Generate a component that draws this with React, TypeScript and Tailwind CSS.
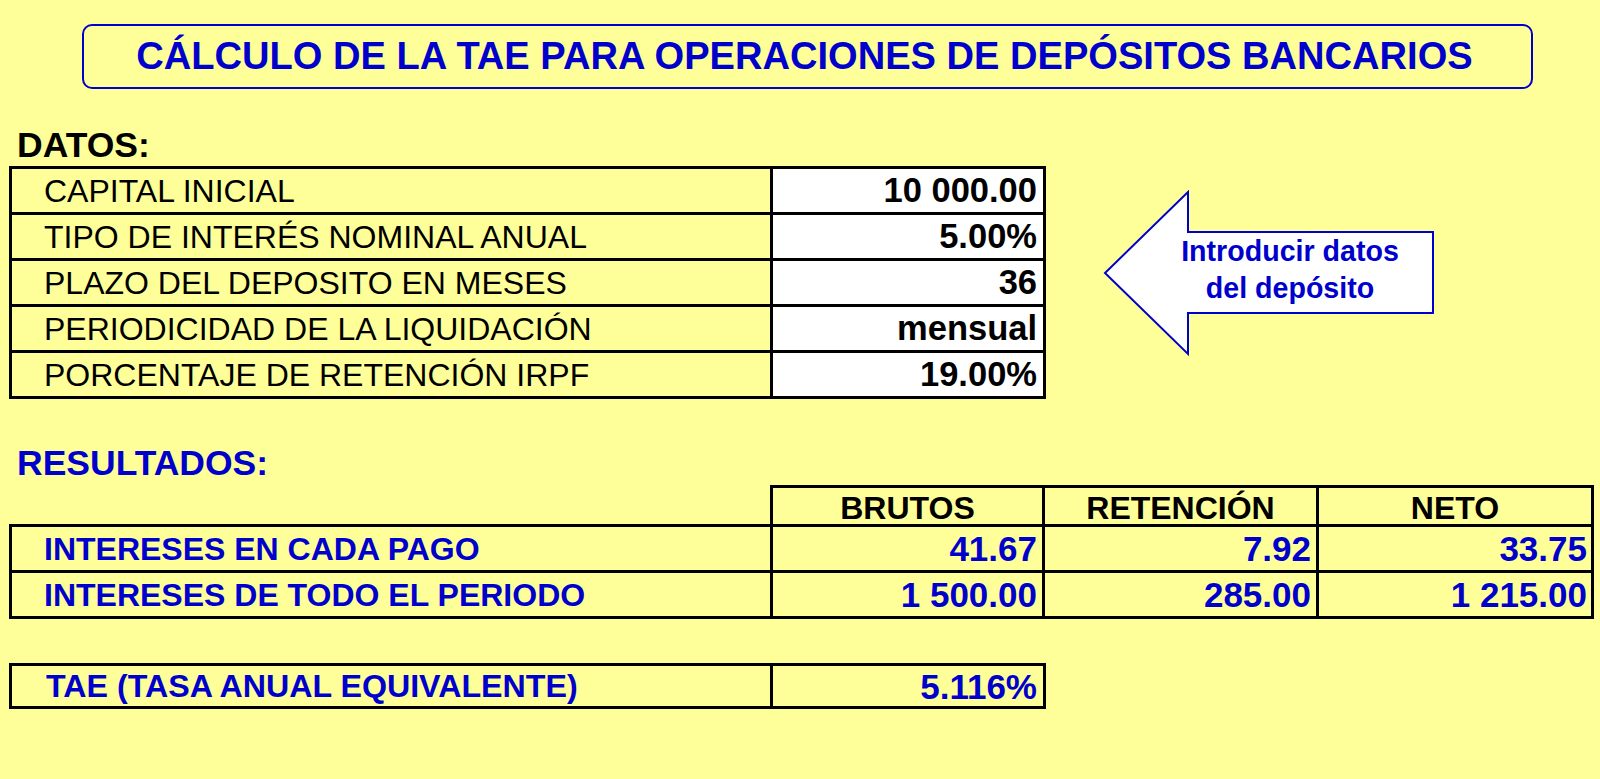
import React from 'react';

const blue = 'text-[#0000cc]';

const datos = [
  { label: 'CAPITAL INICIAL', value: '10 000.00' },
  { label: 'TIPO DE INTERÉS NOMINAL ANUAL', value: '5.00%' },
  { label: 'PLAZO DEL DEPOSITO EN MESES', value: '36' },
  { label: 'PERIODICIDAD DE LA LIQUIDACIÓN', value: 'mensual' },
  { label: 'PORCENTAJE DE RETENCIÓN IRPF', value: '19.00%' },
];

const resultados = [
  { label: 'INTERESES EN CADA PAGO', brutos: '41.67', retencion: '7.92', neto: '33.75' },
  { label: 'INTERESES DE TODO EL PERIODO', brutos: '1 500.00', retencion: '285.00', neto: '1 215.00' },
];

// Left-pointing arrow with the hint text
function HintArrow() {
  return (
    <svg width="334" height="168" viewBox="0 0 334 168" className="ml-[57px] mt-[24px] shrink-0">
      <path
        d="M2 83 L85 2 L85 42 L330 42 L330 123 L85 123 L85 164 Z"
        fill="#ffffff"
        stroke="#0000cc"
        strokeWidth="2"
      />
      <text
        x="187"
        y="71"
        textAnchor="middle"
        fontFamily="'Liberation Sans', Arial, sans-serif"
        fontWeight="bold"
        fontSize="28.6"
        fill="#0000cc"
      >
        Introducir datos
      </text>
      <text
        x="187"
        y="108"
        textAnchor="middle"
        fontFamily="'Liberation Sans', Arial, sans-serif"
        fontWeight="bold"
        fontSize="28.6"
        fill="#0000cc"
      >
        del depósito
      </text>
    </svg>
  );
}

export default function App() {
  return (
    <div className="min-h-screen w-full bg-[#ffff99] font-['Liberation_Sans',Arial,sans-serif] pt-[24px] leading-none">
      {/* Title */}
      <div className={`ml-[82px] w-[1451px] h-[65px] pr-[6px] border-2 border-[#0000cc] rounded-[10px] flex items-center justify-center text-[38.1px] font-bold ${blue}`}>
        CÁLCULO DE LA TAE PARA OPERACIONES DE DEPÓSITOS BANCARIOS
      </div>

      {/* Datos */}
      <h2 className="mt-[39px] ml-[17px] h-[36px] text-[35.5px] font-bold text-black">DATOS:</h2>
      <div className="mt-[2px] flex items-start">
        <div className="ml-[9px] grid grid-cols-[761px_276px]">
          {datos.map((row, i) => (
            <React.Fragment key={row.label}>
              <div
                className={`flex items-center pl-[32px] border-l-[3px] border-b-[3px] border-black text-[32px] text-black ${
                  i === 0 ? 'h-[49px] border-t-[3px]' : 'h-[46px]'
                }`}
              >
                {row.label}
              </div>
              <div
                className={`flex items-center justify-end pr-[6px] bg-white border-l-[3px] border-r-[3px] border-b-[3px] border-black text-[34.5px] font-bold text-black ${
                  i === 0 ? 'h-[49px] border-t-[3px]' : 'h-[46px]'
                }`}
              >
                {row.value}
              </div>
            </React.Fragment>
          ))}
        </div>
        <HintArrow />
      </div>

      {/* Resultados */}
      <h2 className={`mt-[47px] ml-[17px] h-[36px] text-[35.5px] font-bold ${blue}`}>RESULTADOS:</h2>
      <div className="mt-[3px] ml-[9px] grid grid-cols-[761px_275px_274px_275px]">
        <div className="h-[39px]" />
        {['BRUTOS', 'RETENCIÓN', 'NETO'].map((h, i) => (
          <div
            key={h}
            className={`h-[39px] pt-[3px] flex items-center justify-center border-t-[3px] border-r-[3px] border-black text-[32px] font-bold text-black ${
              i === 0 ? 'border-l-[3px]' : ''
            }`}
          >
            {h}
          </div>
        ))}
        {resultados.map((row, i) => (
          <React.Fragment key={row.label}>
            <div
              className={`flex items-center pl-[32px] border-l-[3px] border-b-[3px] border-black text-[32px] font-bold ${blue} ${
                i === 0 ? 'h-[49px] border-t-[3px]' : 'h-[46px]'
              }`}
            >
              {row.label}
            </div>
            {[row.brutos, row.retencion, row.neto].map((v, j) => (
              <div
                key={j}
                className={`flex items-center justify-end border-r-[3px] border-b-[3px] border-black text-[35px] font-bold ${blue} ${
                  i === 0 ? 'h-[49px] border-t-[3px]' : 'h-[46px]'
                } ${j === 0 ? 'border-l-[3px] pr-[5px]' : j === 1 ? 'pr-[5px]' : 'pr-[4px]'}`}
              >
                {v}
              </div>
            ))}
          </React.Fragment>
        ))}
      </div>

      {/* TAE */}
      <div className="mt-[44px] ml-[9px] grid grid-cols-[761px_276px] w-[1037px]">
        <div className={`h-[46px] flex items-center pl-[34px] border-[3px] border-r-0 border-black text-[32.2px] font-bold ${blue}`}>
          TAE (TASA ANUAL EQUIVALENTE)
        </div>
        <div className={`h-[46px] flex items-center justify-end pr-[6px] border-[3px] border-black text-[35px] font-bold ${blue}`}>
          5.116%
        </div>
      </div>
    </div>
  );
}
